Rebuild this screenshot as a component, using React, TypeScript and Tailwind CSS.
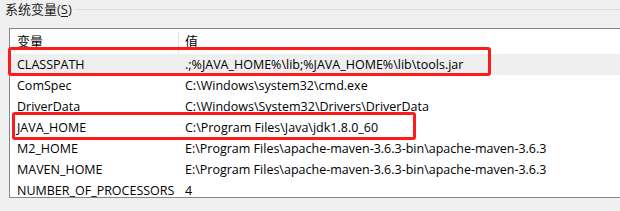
import React from 'react';

const rows: [string, string][] = [
  ['CLASSPATH', '.;%JAVA_HOME%\\lib;%JAVA_HOME%\\lib\\tools.jar'],
  ['ComSpec', 'C:\\Windows\\system32\\cmd.exe'],
  ['DriverData', 'C:\\Windows\\System32\\Drivers\\DriverData'],
  ['JAVA_HOME', 'C:\\Program Files\\Java\\jdk1.8.0_60'],
  ['M2_HOME', 'E:\\Program Files\\apache-maven-3.6.3-bin\\apache-maven-3.6.3'],
  ['MAVEN_HOME', 'E:\\Program Files\\apache-maven-3.6.3-bin\\apache-maven-3.6.3'],
  ['NUMBER_OF_PROCESSORS', '4'],
];

export default function App() {
  return (
    <div className="relative w-[620px] h-[211px] overflow-hidden bg-[#f0f0f0] text-[12.5px] text-black font-['Open_Sans','Noto_Sans_CJK_SC',sans-serif]">
      {/* 分组框标题 */}
      <div className="flex items-center h-[19px]">
        <span className="pl-[5px] pr-[3px] leading-none text-[13px] text-[#1a1a1a]">
          系统变量(<span className="underline underline-offset-2">S</span>)
        </span>
        <div className="flex-1 h-px bg-[#dcdcdc]"></div>
      </div>

      {/* 列表 */}
      <div className="ml-[9px] mt-[9px] h-[170px] overflow-hidden bg-white border-l border-t border-b border-[#828790]">
        <div className="flex h-[25px] items-center pt-px">
          <div className="w-[168px] pl-[7px] text-[13px]">变量</div>
          <div className="w-px h-[23px] mt-[2px] self-start bg-[#e5e5e5]"></div>
          <div className="pl-[6px] text-[13px]">值</div>
        </div>
        {rows.map(([name, value], i) => (
          <div key={name} className={`flex h-[21px] items-center pt-px whitespace-nowrap ${i === 0 ? 'bg-[#efefef]' : ''}`}>
            <div className="w-[168px] pl-[7px]">{name}</div>
            <div className="pl-[7px]">{value}</div>
          </div>
        ))}
      </div>

      {/* 红色标注框 */}
      <div className="absolute left-[8px] top-[47px] w-[483px] h-[29px] border-[3px] border-[#ff1a1a] rounded-[3px]"></div>
      <div className="absolute left-[12px] top-[112px] w-[404px] h-[28px] border-[3px] border-[#ff1a1a] rounded-[3px]"></div>
    </div>
  );
}
